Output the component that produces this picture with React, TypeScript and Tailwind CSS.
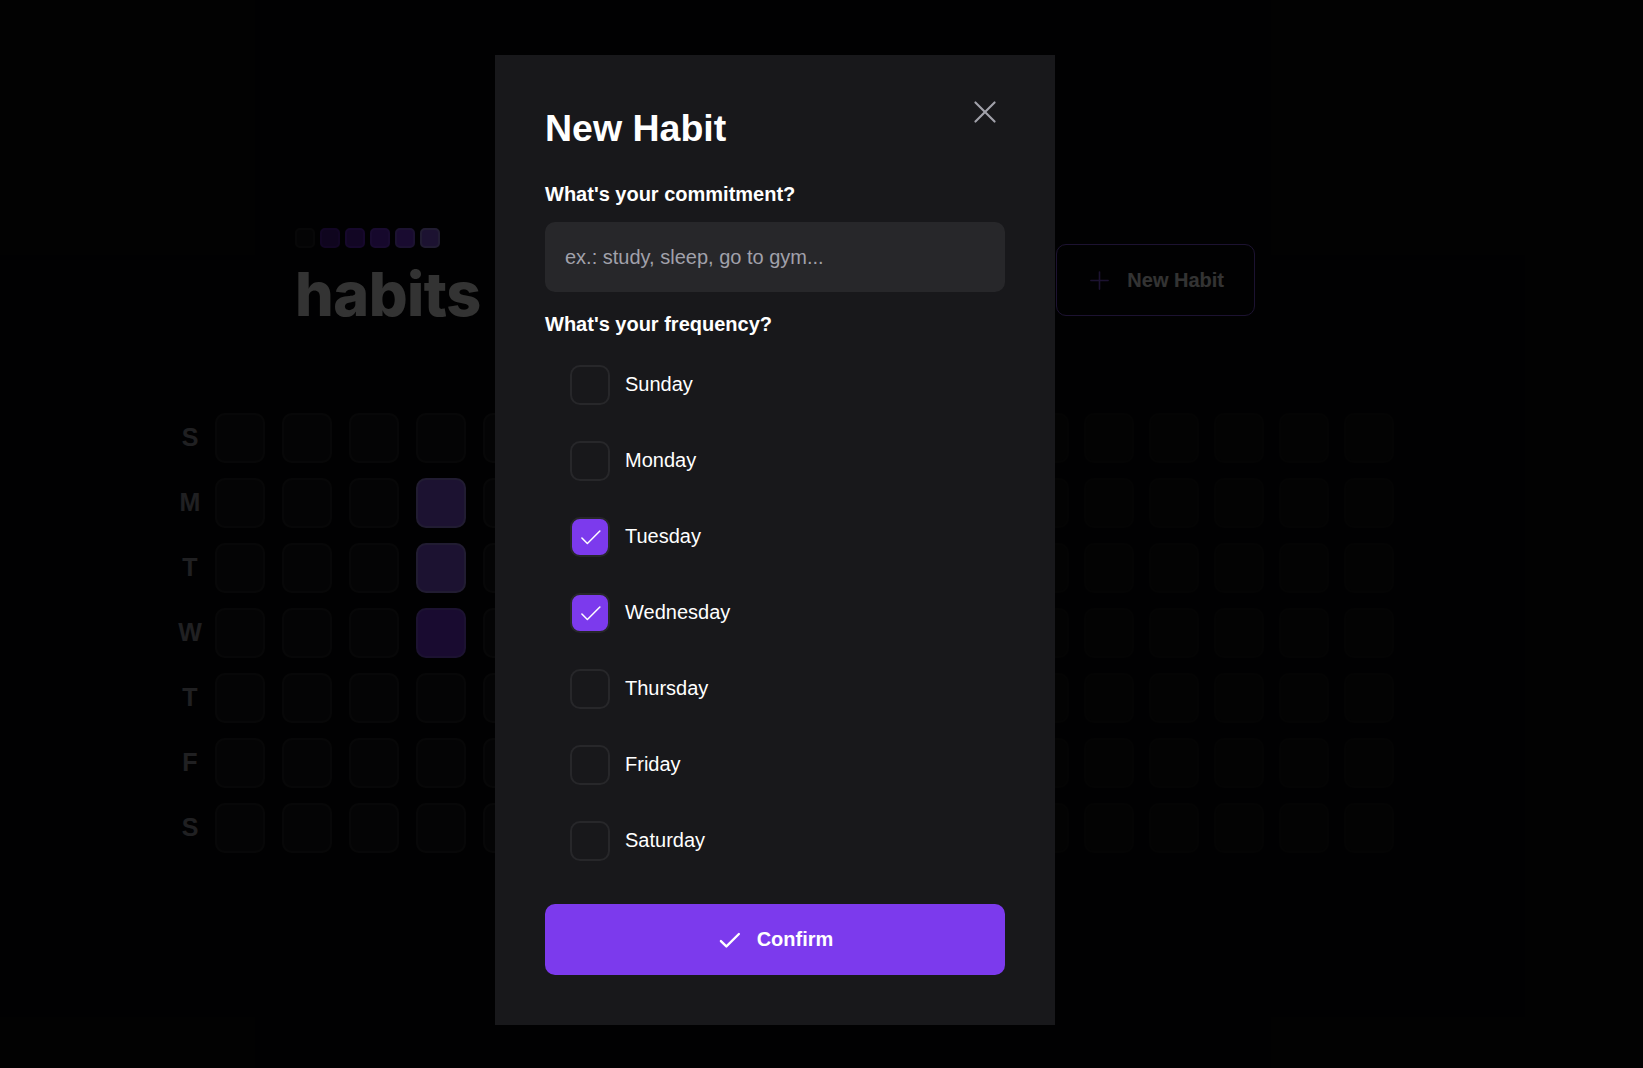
import { PiCheck, PiCheckBold, PiPlus, PiX } from 'react-icons/pi';

const weekDays = ['S', 'M', 'T', 'W', 'T', 'F', 'S'];

const frequency = [
  { label: 'Sunday', checked: false },
  { label: 'Monday', checked: false },
  { label: 'Tuesday', checked: true },
  { label: 'Wednesday', checked: true },
  { label: 'Thursday', checked: false },
  { label: 'Friday', checked: false },
  { label: 'Saturday', checked: false },
];

// completion level per day index (column * 7 + row)
const completed: Record<number, 'high' | 'mid'> = {
  22: 'high',
  23: 'high',
  24: 'mid',
};

const realDays = 12 * 7;
const placeholders = 6 * 7;

function Logo() {
  return (
    <div className="flex h-[105px] flex-col gap-[15px]">
      <div className="flex gap-[5px]">
        <span className="h-[20px] w-[20px] rounded-[5px] border-2 border-[#27272a] bg-[#18181b]" />
        <span className="h-[20px] w-[20px] rounded-[5px] border-2 border-[#5b21b6] bg-[#4c1d95]" />
        <span className="h-[20px] w-[20px] rounded-[5px] border-2 border-[#6d28d9] bg-[#5b21b6]" />
        <span className="h-[20px] w-[20px] rounded-[5px] border-2 border-[#7c3aed] bg-[#6d28d9]" />
        <span className="h-[20px] w-[20px] rounded-[5px] border-2 border-[#8b5cf6] bg-[#7c3aed]" />
        <span className="h-[20px] w-[20px] rounded-[5px] border-2 border-[#a78bfa] bg-[#8b5cf6]" />
      </div>
      <span className="font-['Inter',sans-serif] text-[61px] font-extrabold leading-[62px] tracking-[-0.5px] text-white">
        habits
      </span>
    </div>
  );
}

function Header() {
  return (
    <div className="mx-auto flex w-[960px] items-center justify-between">
      <Logo />
      <button
        type="button"
        className="flex items-center gap-[15px] rounded-[10px] border border-[#8b5cf6] px-[30px] py-[20px] text-[20px] font-semibold leading-[30px] text-white"
      >
        <PiPlus size={25} className="text-[#8b5cf6]" />
        New Habit
      </button>
    </div>
  );
}

function SummaryTable() {
  return (
    <div className="flex w-full">
      <div className="grid grid-rows-7 gap-[15px]">
        {weekDays.map((d, i) => (
          <div
            key={i}
            className="flex h-[50px] w-[50px] items-center justify-center text-[25px] font-bold text-[#a1a1aa]"
          >
            {d}
          </div>
        ))}
      </div>

      <div className="grid grid-flow-col grid-rows-7 grid-cols-[repeat(12,52px)_repeat(6,50px)] gap-[15px]">
        {Array.from({ length: realDays }).map((_, i) => {
          const level = completed[i];
          return (
            <div
              key={i}
              className={
                level === 'high'
                  ? 'h-[50px] w-[50px] rounded-[10px] border-2 border-[#a78bfa] bg-[#8b5cf6]'
                  : level === 'mid'
                  ? 'h-[50px] w-[50px] rounded-[10px] border-2 border-[#8b5cf6] bg-[#7c3aed]'
                  : 'h-[50px] w-[50px] rounded-[10px] border-2 border-[#27272a] bg-[#18181b]'
              }
            />
          );
        })}
        {Array.from({ length: placeholders }).map((_, i) => (
          <div
            key={`p${i}`}
            className="h-[50px] w-[50px] rounded-[10px] border-2 border-[#27272a] bg-[#18181b] opacity-40"
          />
        ))}
      </div>
    </div>
  );
}

function NewHabitModal() {
  return (
    <div className="absolute left-[495px] top-[55px] w-[560px] bg-[#18181b] p-[50px]">
      <button type="button" aria-label="Close" className="absolute right-[53px] top-[40px] text-[#a1a1aa]">
        <PiX size={34} />
      </button>

      <h2 className="text-[37.5px] font-extrabold leading-[46.875px] text-white">New Habit</h2>

      <form className="mt-[30px] flex flex-col">
        <label htmlFor="title" className="text-[20px] font-semibold leading-[25px] text-white">
          What's your commitment?
        </label>
        <input
          id="title"
          type="text"
          placeholder="ex.: study, sleep, go to gym..."
          className="mt-[15px] h-[70px] rounded-[10px] bg-[#27272a] px-[20px] pb-[19px] pt-[21px] text-[20px] leading-[30px] text-white outline-none placeholder:text-[#a1a1aa]"
        />

        <label className="mt-[20px] text-[20px] font-semibold leading-[25px] text-white">
          What's your frequency?
        </label>

        <div className="mt-[15px] flex flex-col gap-[10px]">
          {frequency.map((day) => (
            <div key={day.label} className="flex items-center gap-[15px] px-[25px] py-[13px]">
              <div
                className={
                  day.checked
                    ? 'flex h-[40px] w-[40px] items-center justify-center rounded-[10px] border-2 border-[#27272a] bg-[#7c3aed]'
                    : 'flex h-[40px] w-[40px] items-center justify-center rounded-[10px] border-2 border-[#27272a] bg-[#18181b]'
                }
              >
                {day.checked && <PiCheck size={25} className="text-white" />}
              </div>
              <span className="text-[20px] leading-[25px] text-white">{day.label}</span>
            </div>
          ))}
        </div>

        <button
          type="button"
          className="mt-[30px] flex h-[71px] items-center justify-center gap-[15px] rounded-[10px] bg-[#7c3aed] px-[20px] text-[20px] font-semibold leading-[30px] text-white"
        >
          <PiCheckBold size={25} />
          Confirm
        </button>
      </form>
    </div>
  );
}

export default function App() {
  return (
    <div className="relative h-screen w-full overflow-hidden bg-[#09090a] font-['Liberation_Sans',Arial,sans-serif]">
      <div className="flex h-[1080px] w-[1550px] items-center justify-center">
        <div className="flex w-[1280px] flex-col gap-[80px] px-[30px]">
          <Header />
          <SummaryTable />
        </div>
      </div>

      <div className="absolute inset-0 bg-black/80" />

      <NewHabitModal />
    </div>
  );
}
